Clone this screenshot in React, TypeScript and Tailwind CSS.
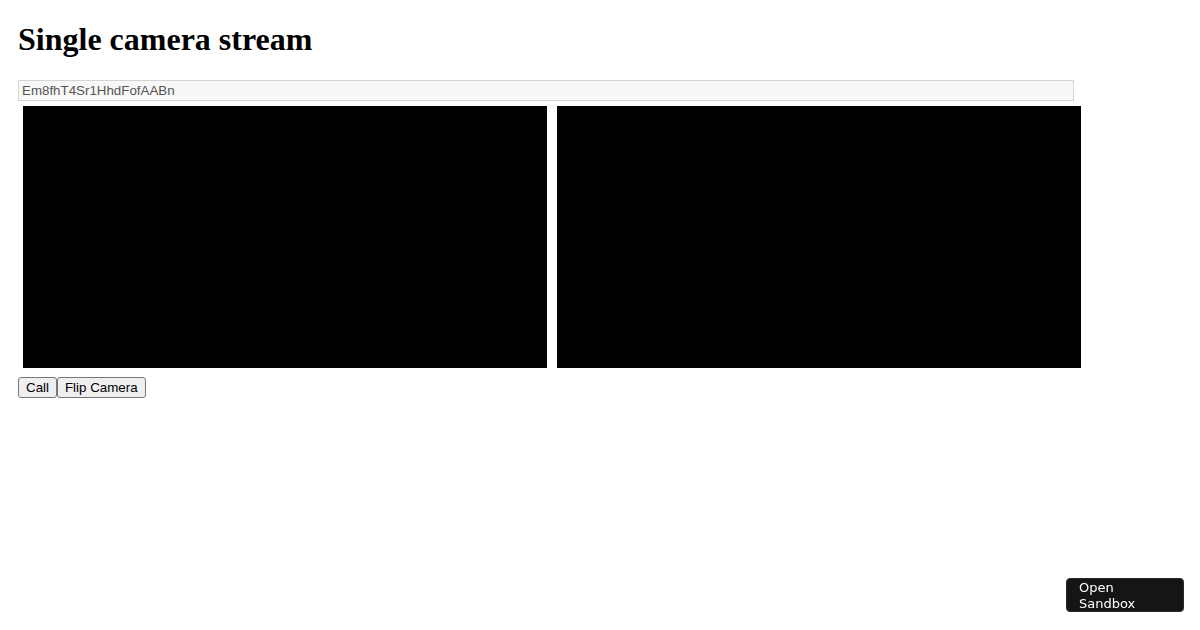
export default function App() {
  return (
    <div className="min-h-[630px] bg-white px-[18px] text-black [font-family:'Liberation_Serif',serif]">
      <h1 className="pt-[21px] text-[32px] font-bold leading-[36px]">Single camera stream</h1>
      <div className="mt-[23px] flex flex-col">
        <input
          readOnly
          value="Em8fhT4Sr1HhdFofAABn"
          className="h-[21px] w-[1056px] border border-[#d4d4d4] bg-[#f8f8f8] px-[3px] text-[13.33px] text-[#555] outline-none [font-family:'Liberation_Sans',Arial,sans-serif]"
        />
        <div className="flex gap-[10px] px-[5px] py-[5px]">
          <div className="h-[262px] w-[524px] bg-black" />
          <div className="h-[262px] w-[524px] bg-black" />
        </div>
        <div className="mt-[4px] flex [font-family:'Liberation_Sans',Arial,sans-serif]">
          <button className="h-[21px] rounded-[3px] border border-[#767676] bg-[#efefef] px-[7px] text-[13.33px] leading-none text-black">
            Call
          </button>
          <button className="h-[21px] rounded-[3px] border border-[#767676] bg-[#efefef] px-[7px] text-[13.33px] leading-none text-black">
            Flip Camera
          </button>
        </div>
      </div>
      <div className="fixed bottom-[18px] right-[16px] flex h-[34px] w-[118px] flex-col justify-center rounded-[4px] border border-[#2a2a2a] bg-[#151515] px-[12px] pt-[2px] text-[13px] leading-[16px] text-white [font-family:'DejaVu_Sans',sans-serif]">
        <span>Open</span>
        <span>Sandbox</span>
      </div>
    </div>
  );
}
